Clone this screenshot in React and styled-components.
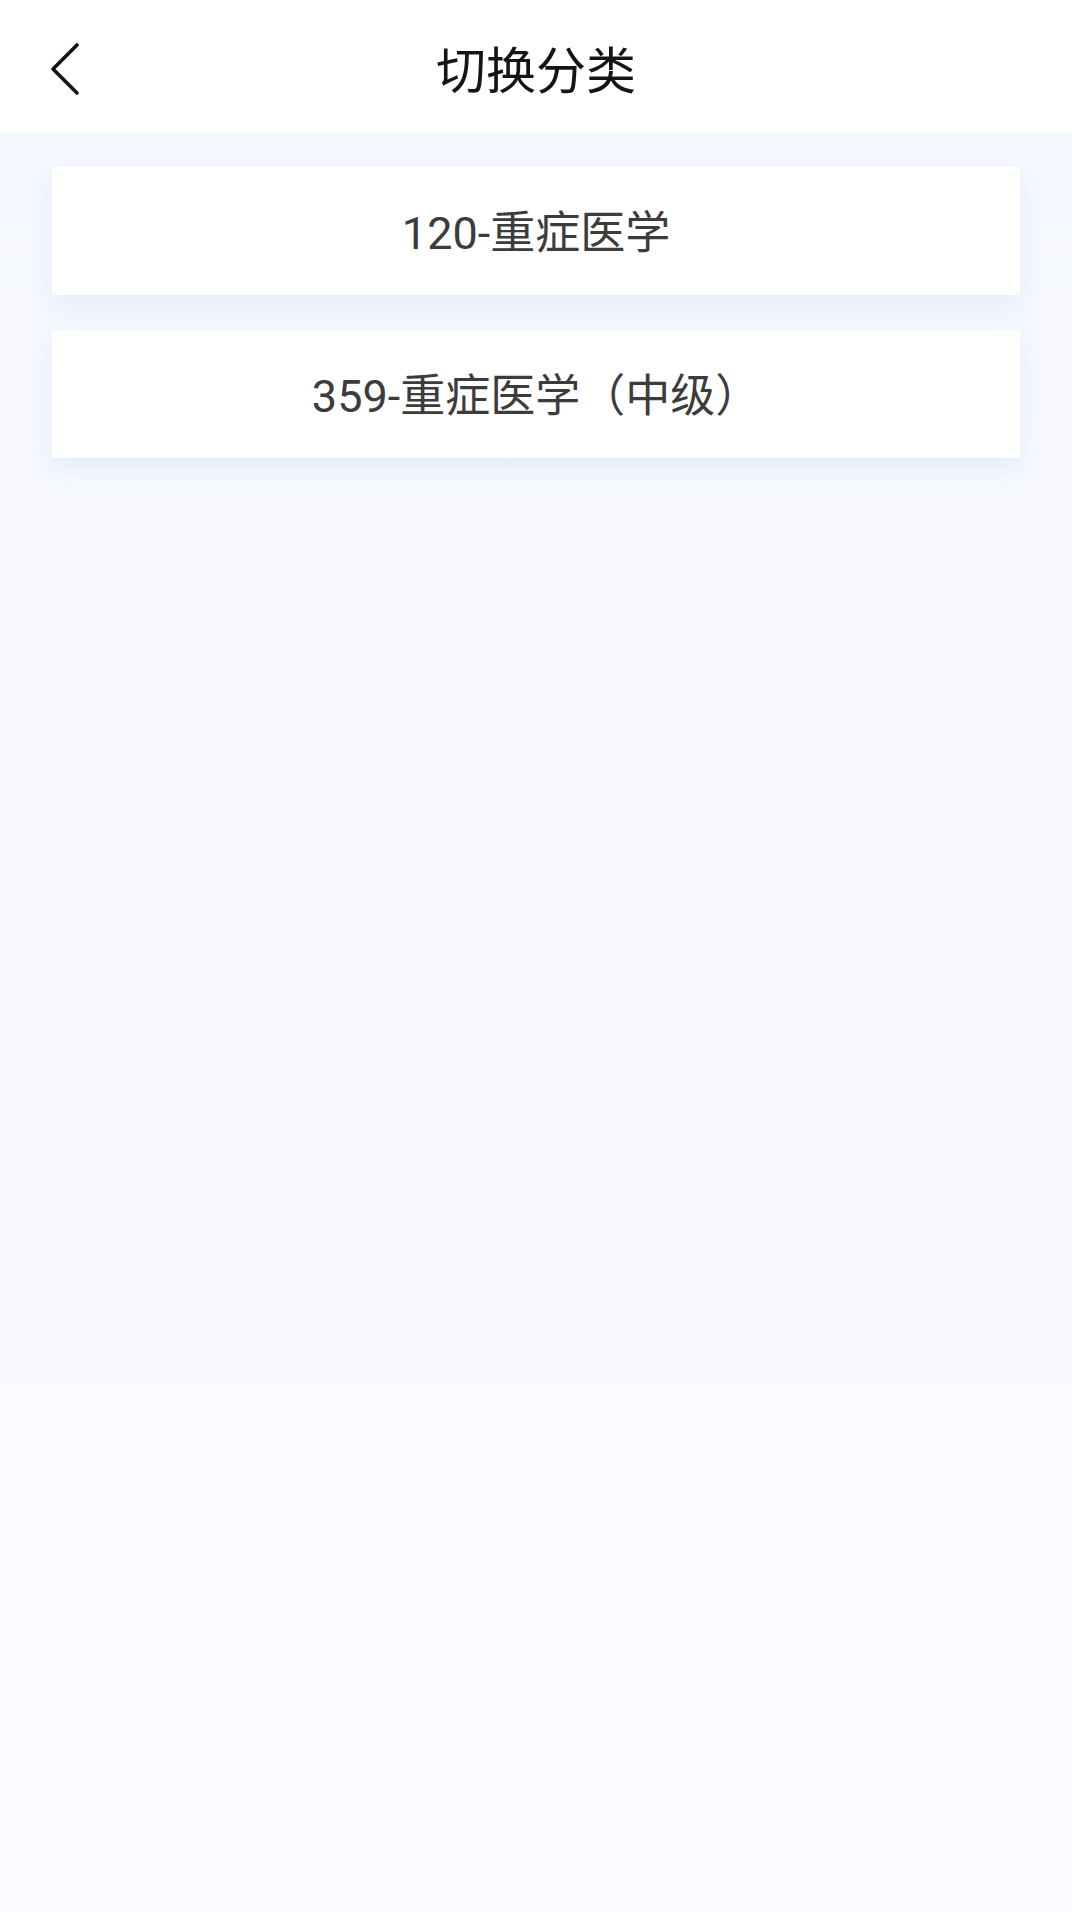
import React from "react";
import styled, { createGlobalStyle } from "styled-components";

const GlobalStyle = createGlobalStyle`
  * {
    box-sizing: border-box;
  }
  body {
    margin: 0;
    font-family: Roboto, "Noto Sans CJK SC", "Noto Sans", sans-serif;
    background: #f8f9fe;
  }
`;

const Page = styled.div`
  min-height: 1912px;
  display: flex;
  flex-direction: column;
  background: linear-gradient(180deg, #f5f8fe 0%, #f8f9fe 40%, #fafbff 100%);
`;

const Header = styled.header`
  position: relative;
  height: 132px;
  background: #ffffff;
  display: flex;
  align-items: center;
  justify-content: center;
`;

const BackButton = styled.button`
  position: absolute;
  left: 40px;
  top: 38px;
  width: 48px;
  height: 62px;
  padding: 0;
  border: none;
  background: none;
  display: flex;
  align-items: center;
  justify-content: center;
  cursor: pointer;
`;

const Title = styled.h1`
  margin: 2px 0 0;
  font-family: "Noto Sans CJK SC", sans-serif;
  font-size: 50px;
  font-weight: 400;
  color: #151515;
`;

const List = styled.div`
  display: flex;
  flex-direction: column;
  gap: 35px;
  padding: 35px 52px;
`;

const Card = styled.div`
  height: 128px;
  padding-bottom: 4px;
  background: #ffffff;
  display: flex;
  align-items: center;
  justify-content: center;
  font-size: 45px;
  color: #3c3c3c;
  box-shadow: 0 10px 22px rgba(196, 212, 240, 0.35);
  cursor: pointer;
`;

const categories = ["120-重症医学", "359-重症医学（中级）"];

const App = () => {
  return (
    <Page>
      <GlobalStyle />
      <Header>
        <BackButton aria-label="返回">
          <svg width="32" height="54" viewBox="0 0 32 54" fill="none">
            <path
              d="M29 3 L5 27 L29 51"
              stroke="#111"
              strokeWidth="3.6"
              strokeLinecap="round"
              strokeLinejoin="round"
            />
          </svg>
        </BackButton>
        <Title>切换分类</Title>
      </Header>
      <List>
        {categories.map((name) => (
          <Card key={name}>{name}</Card>
        ))}
      </List>
    </Page>
  );
};

export default App;
